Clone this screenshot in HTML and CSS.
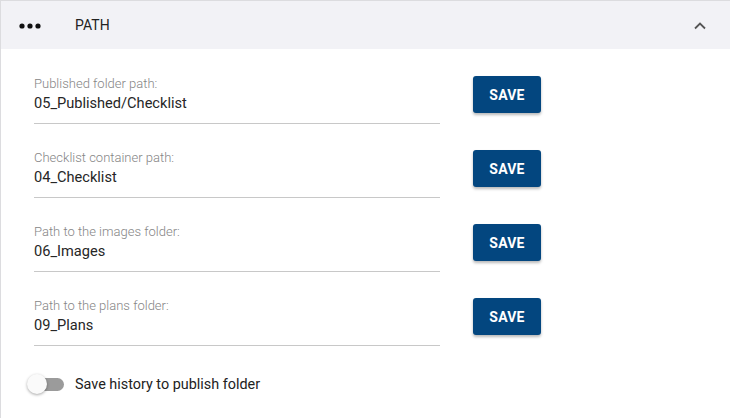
FILE: index.html
```html
<!DOCTYPE html>
<html>
<head>
<meta charset="utf-8">
<link rel="stylesheet" href="styles.css">
</head>
<body>
<div class="panel">
  <div class="header">
    <svg class="dots" width="22" height="6" viewBox="0 0 22 6"><circle cx="3" cy="3" r="2.6" fill="#111"/><circle cx="11" cy="3" r="2.6" fill="#111"/><circle cx="19" cy="3" r="2.6" fill="#111"/></svg>
    <span class="title">PATH</span>
    <svg class="chevron" width="14" height="9" viewBox="0 0 14 9"><polyline points="2,7.5 7,2.5 12,7.5" fill="none" stroke="#555" stroke-width="1.8"/></svg>
  </div>
  <div class="content">
    <div class="row">
      <div class="field">
        <div class="label">Published folder path:</div>
        <div class="value">05_Published/Checklist</div>
      </div>
      <button class="save">SAVE</button>
    </div>
    <div class="row">
      <div class="field">
        <div class="label">Checklist container path:</div>
        <div class="value">04_Checklist</div>
      </div>
      <button class="save">SAVE</button>
    </div>
    <div class="row">
      <div class="field">
        <div class="label">Path to the images folder:</div>
        <div class="value">06_Images</div>
      </div>
      <button class="save">SAVE</button>
    </div>
    <div class="row">
      <div class="field">
        <div class="label">Path to the plans folder:</div>
        <div class="value">09_Plans</div>
      </div>
      <button class="save">SAVE</button>
    </div>
    <div class="toggle-row">
      <span class="switch"><span class="track"></span><span class="thumb"></span></span>
      <span class="toggle-label">Save history to publish folder</span>
    </div>
  </div>
</div>
</body>
</html>
```
FILE: styles.css
```css
html, body {
  margin: 0;
  padding: 0;
  background: #fff;
}
body {
  font-family: Roboto, "Liberation Sans", Arial, sans-serif;
  color: #222;
}
.panel {
  width: 730px;
  height: 418px;
  box-sizing: border-box;
  border-top: 1px solid #dcdcdf;
  border-left: 1px solid #dcdcdf;
}
.header {
  height: 48px;
  background: #f2f2f6;
  display: flex;
  align-items: center;
  padding-left: 18px;
  padding-right: 23px;
}
.dots {
  display: block;
  margin-top: 1px;
}
.title {
  margin-left: 34px;
  font-size: 14px;
  color: #222;
  letter-spacing: 0.1px;
}
.chevron {
  margin-left: auto;
  display: block;
}
.content {
  padding: 27px 0 0 33px;
  display: flex;
  flex-direction: column;
  gap: 26px;
}
.row {
  display: flex;
  align-items: flex-start;
}
.field {
  width: 406px;
  height: 48px;
  box-sizing: border-box;
  border-bottom: 1px solid #c8c8c8;
}
.label {
  font-size: 13px;
  line-height: 16px;
  font-weight: 300;
  color: #858585;
}
.value {
  font-size: 14.6px;
  line-height: 22px;
  color: #262626;
}
.save {
  margin-left: 33px;
  width: 68px;
  height: 37px;
  border: none;
  border-radius: 3px;
  background: #03467f;
  color: #fff;
  font-family: Roboto, "Liberation Sans", Arial, sans-serif;
  font-weight: bold;
  font-size: 14px;
  letter-spacing: 0.2px;
  box-shadow: 0 2px 3px rgba(0,0,0,0.28);
  padding: 0;
}
.toggle-row {
  display: flex;
  align-items: center;
  margin-top: 0;
  height: 24px;
}
.switch {
  position: relative;
  width: 37px;
  height: 20px;
  margin-left: -7px;
  display: block;
}
.track {
  position: absolute;
  left: 2px;
  right: 0;
  top: 4px;
  height: 13px;
  border-radius: 7px;
  background: #9b9b9b;
}
.thumb {
  position: absolute;
  left: 0;
  top: 0;
  width: 20px;
  height: 20px;
  border-radius: 50%;
  background: #fafafa;
  box-shadow: 0 1px 3px rgba(0,0,0,0.35);
}
.toggle-label {
  margin-left: 11px;
  font-size: 14.4px;
  color: #222;
}
```
